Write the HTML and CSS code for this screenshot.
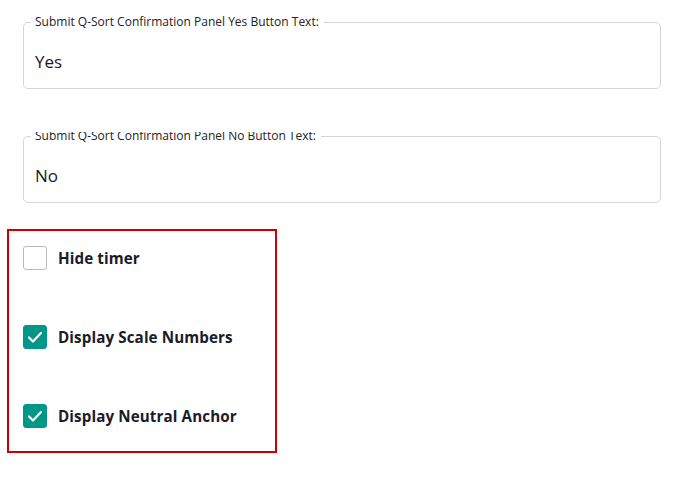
FILE: index.html
```html
<!DOCTYPE html>
<html lang="en">
<head>
    <meta charset="UTF-8">
    <meta name="viewport" content="width=device-width, initial-scale=1.0">
    <title>Q-Sort Settings</title>
    <link rel="stylesheet" href="styles.css">
</head>
<body>
    <div class="settings">
        <div class="field-wrap">
            <fieldset class="text-field">
                <legend>Submit Q-Sort Confirmation Panel Yes Button Text:</legend>
                <div class="field-value">Yes</div>
            </fieldset>
        </div>

        <div class="field-wrap field-wrap-clipped">
            <fieldset class="text-field">
                <legend>Submit Q-Sort Confirmation Panel No Button Text:</legend>
                <div class="field-value">No</div>
            </fieldset>
        </div>

        <div class="options-box">
            <label class="option">
                <span class="check"></span>
                <span class="option-label">Hide timer</span>
            </label>
            <label class="option">
                <span class="check checked">
                    <svg viewBox="0 0 24 24" width="24" height="24"><path d="M6 12.5 L10 16.5 L18 8" fill="none" stroke="#fff" stroke-width="2.2" stroke-linecap="round" stroke-linejoin="round"/></svg>
                </span>
                <span class="option-label">Display Scale Numbers</span>
            </label>
            <label class="option">
                <span class="check checked">
                    <svg viewBox="0 0 24 24" width="24" height="24"><path d="M6 12.5 L10 16.5 L18 8" fill="none" stroke="#fff" stroke-width="2.2" stroke-linecap="round" stroke-linejoin="round"/></svg>
                </span>
                <span class="option-label">Display Neutral Anchor</span>
            </label>
        </div>
    </div>
</body>
</html>
```

FILE: styles.css
```css
body {
    margin: 0;
    font-family: "Open Sans", "Noto Sans", sans-serif;
    background-color: #fff;
    color: #1b1b22;
}

.settings {
    padding-top: 15px;
}

.field-wrap {
    margin: 0 22px 0 23px;
}

.field-wrap-clipped {
    margin-top: 43px;
    overflow: hidden; /* the legend top gets cut off */
}

.field-wrap-clipped .text-field {
    margin-top: -3px;
}

.text-field {
    margin: 0;
    padding: 21px 7px 14px 11px;
    border: 1px solid #d3d7db;
    border-radius: 5px;
    min-width: 0;
}

.text-field legend {
    font-size: 12px;
    line-height: 14px;
    padding: 0 5px 0 4px;
    margin-left: -4px;
    color: #222;
}

.field-value {
    font-size: 17px;
    line-height: 24px;
    color: #1a1a1a;
}

.options-box {
    margin: 26px 0 0 7px;
    border: 2px solid #cc0000;
    padding: 15px 0 23px 14px;
    display: flex;
    flex-direction: column;
    gap: 55px;
    width: 252px;
}

.option {
    display: flex;
    align-items: center;
    gap: 11px;
    height: 24px;
}

.check {
    width: 24px;
    height: 24px;
    box-sizing: border-box;
    border: 1px solid #b5babf;
    border-radius: 3px;
    display: flex;
}

.check.checked {
    background-color: #009688;
    border-color: #009688;
}

.check svg {
    margin: -1px;
}

.option-label {
    font-size: 15.2px;
    font-weight: 700;
    color: #1b1b2a;
    letter-spacing: 0.1px;
}
```
